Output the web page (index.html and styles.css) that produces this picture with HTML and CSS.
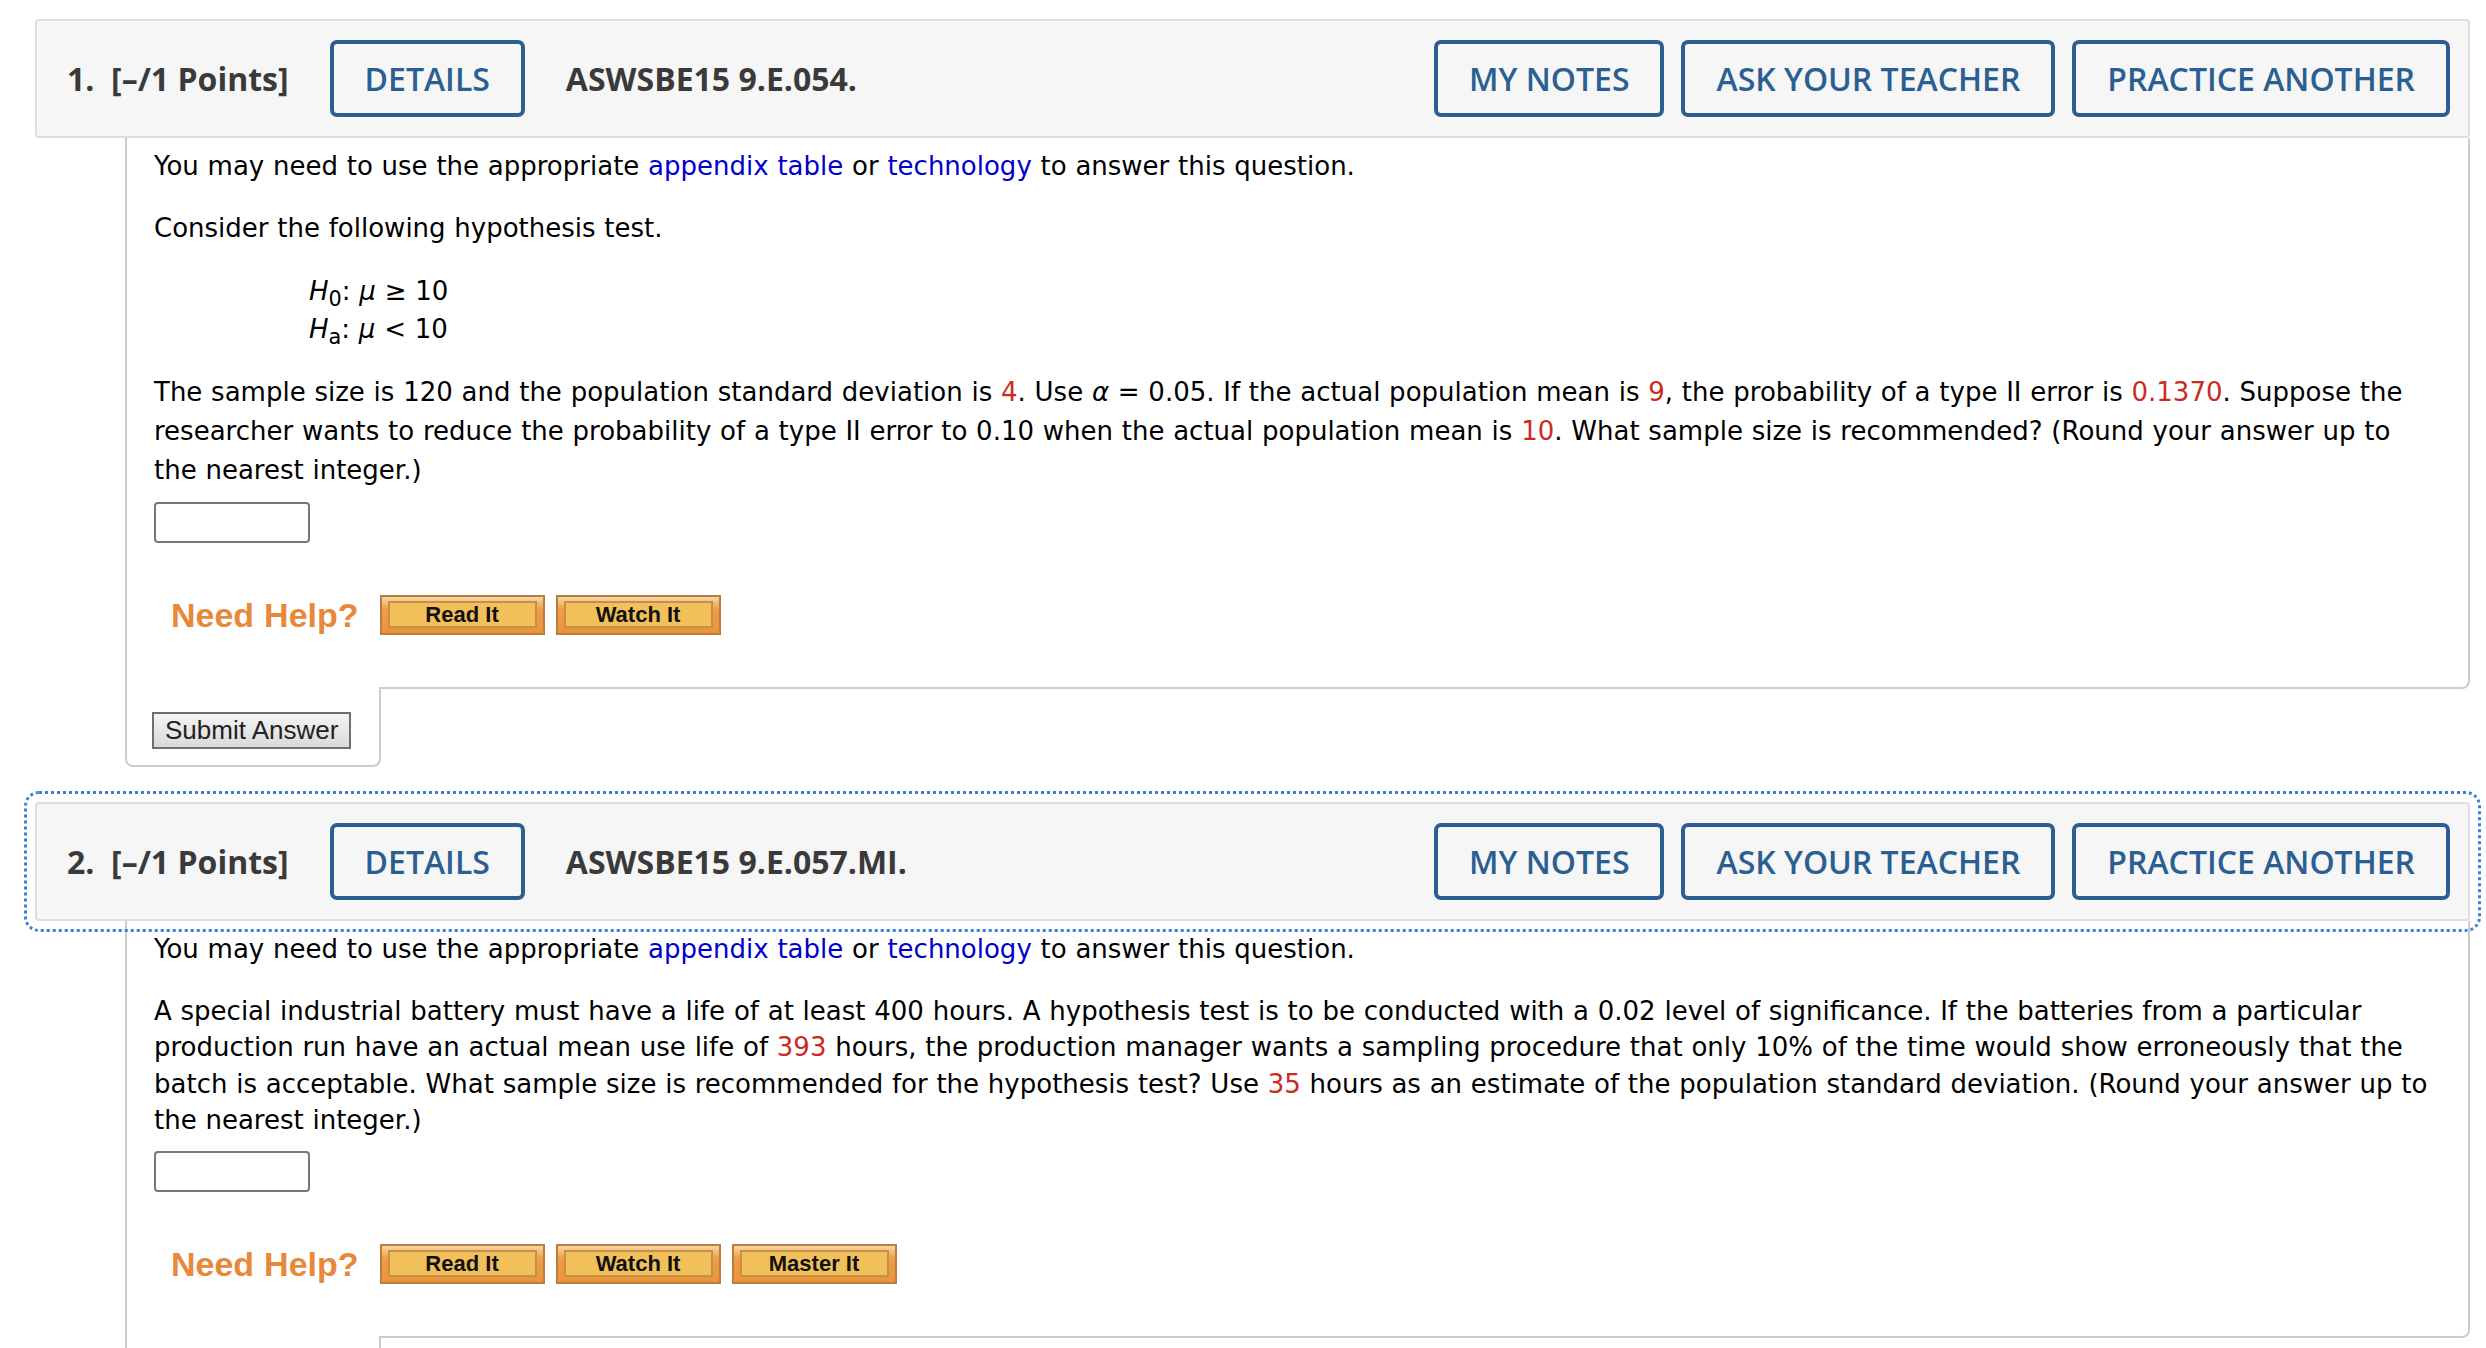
FILE: index.html
```html
<!DOCTYPE html>
<html lang="en">
<head>
  <meta charset="UTF-8" />
  <title>Assignment - Hypothesis Testing</title>
  <link rel="stylesheet" href="styles.css">
</head>
<body>

<div class="question">
  <div class="q-head">
    <span class="q-num">1.&nbsp; [–/1 Points]</span>
    <button class="head-btn">DETAILS</button>
    <span class="q-code">ASWSBE15 9.E.054.</span>
    <div class="head-tools">
      <button class="head-btn">MY NOTES</button>
      <button class="head-btn">ASK YOUR TEACHER</button>
      <button class="head-btn">PRACTICE ANOTHER</button>
    </div>
  </div>
  <div class="q-body">
    <p>You may need to use the appropriate <a href="#">appendix table</a> or <a href="#">technology</a> to answer this question.</p>
    <p>Consider the following hypothesis test.</p>
    <div class="hypo">
      <div><i>H</i><sub>0</sub>: <i>μ</i> ≥ 10</div>
      <div><i>H</i><sub>a</sub>: <i>μ</i> &lt; 10</div>
    </div>
    <p class="q-text math">The sample size is 120 and the population standard deviation is <span class="red">4</span>. Use <i>α</i> = 0.05. If the actual population mean is <span class="red">9</span>, the probability of a type II error is <span class="red">0.1370</span>. Suppose the researcher wants to reduce the probability of a type II error to 0.10 when the actual population mean is <span class="red">10</span>. What sample size is recommended? (Round your answer up to the nearest integer.)</p>
    <input class="answer" type="text" />
    <div class="help">
      <span class="help-label">Need Help?</span>
      <button class="help-btn"><span>Read It</span></button>
      <button class="help-btn"><span>Watch It</span></button>
    </div>
  </div>
  <div class="submit-tab">
    <button class="submit">Submit Answer</button>
  </div>
</div>

<div class="question">
  <div class="q-head focused">
    <span class="q-num">2.&nbsp; [–/1 Points]</span>
    <button class="head-btn">DETAILS</button>
    <span class="q-code">ASWSBE15 9.E.057.MI.</span>
    <div class="head-tools">
      <button class="head-btn">MY NOTES</button>
      <button class="head-btn">ASK YOUR TEACHER</button>
      <button class="head-btn">PRACTICE ANOTHER</button>
    </div>
  </div>
  <div class="q-body">
    <p>You may need to use the appropriate <a href="#">appendix table</a> or <a href="#">technology</a> to answer this question.</p>
    <p class="q-text">A special industrial battery must have a life of at least 400 hours. A hypothesis test is to be conducted with a 0.02 level of significance. If the batteries from a particular production run have an actual mean use life of <span class="red">393</span> hours, the production manager wants a sampling procedure that only 10% of the time would show erroneously that the batch is acceptable. What sample size is recommended for the hypothesis test? Use <span class="red">35</span> hours as an estimate of the population standard deviation. (Round your answer up to the nearest integer.)</p>
    <input class="answer" type="text" />
    <div class="help">
      <span class="help-label">Need Help?</span>
      <button class="help-btn"><span>Read It</span></button>
      <button class="help-btn"><span>Watch It</span></button>
      <button class="help-btn"><span>Master It</span></button>
    </div>
  </div>
  <div class="submit-tab">
    <button class="submit">Submit Answer</button>
  </div>
</div>

</body>
</html>
```

FILE: styles.css
```css
body {
  margin: 0;
  background-color: #fff;
  color: #000;
  font-family: Verdana, "DejaVu Sans", sans-serif;
  font-size: 26px;
  word-spacing: 0.5px;
  overflow: hidden;
}
.question {
  margin: 19px 16px 35px 35px;
}
.q-head {
  display: flex;
  align-items: center;
  gap: 41px;
  height: 115px;
  padding: 0 18px 0 30px;
  background-color: #f6f6f6;
  border: 2px solid #dedede;
  border-radius: 4px;
  font-family: "Open Sans", sans-serif;
  font-size: 32px;
  font-weight: 700;
  word-spacing: 0;
  color: #3a3a3a;
}
.q-head.focused {
  outline: 3px dotted #3c7fd8;
  outline-offset: 8px;
}
.head-tools {
  margin-left: auto;
  display: flex;
  gap: 17px;
}
.head-btn {
  height: 77px;
  padding: 0 31px;
  font-family: "Open Sans", sans-serif;
  font-size: 32px;
  font-weight: 600;
  color: #2b5f92;
  background-color: #f6f6f6;
  border: 4px solid #2c5e92;
  border-radius: 7px;
  cursor: pointer;
}
.q-body {
  margin-left: 90px;
  padding: 10px 36px 52px 27px;
  border: 2px solid #ccc;
  border-top: 0;
  border-bottom-right-radius: 8px;
  line-height: 36.5px;
}
p {
  margin: 0 0 25px;
}
a {
  color: #0000cc;
  text-decoration: none;
}
.red {
  color: #cc2a1e;
}
.hypo {
  padding-left: 155px;
  margin: 26px 0 25px;
  line-height: 38px;
}
sub {
  font-size: 0.8em;
  line-height: 0;
}
.q-text {
  margin-bottom: 12px;
}
.q-text.math {
  line-height: 39px;
}
.answer {
  display: block;
  box-sizing: border-box;
  width: 156px;
  height: 41px;
  border: 2px solid #777;
  border-radius: 4px;
}
.help {
  display: flex;
  align-items: center;
  gap: 11px;
  margin-top: 52px;
  padding-left: 17px;
}
.help-label {
  margin-right: 10px;
  font-family: "Liberation Sans", Arial, sans-serif;
  font-size: 34px;
  font-weight: 700;
  line-height: 40px;
  color: #e8893a;
}
.help-btn {
  box-sizing: border-box;
  width: 165px;
  height: 40px;
  padding: 4px 6px 5px;
  border: 2px solid #b87d40;
  background: linear-gradient(#f8d7a2, #ef9d42 35%, #ec9436);
  cursor: pointer;
}
.help-btn span {
  display: block;
  box-sizing: border-box;
  height: 27px;
  border: 2px solid #c4904f;
  background-color: #f2c05a;
  font-family: "Liberation Sans", Arial, sans-serif;
  font-size: 22px;
  font-weight: 700;
  line-height: 23px;
  word-spacing: 0;
  color: #111;
}
.submit-tab {
  box-sizing: border-box;
  width: 256px;
  margin: -2px 0 0 90px;
  padding: 25px 0 16px 25px;
  background-color: #fff;
  border: 2px solid #ccc;
  border-top: 0;
  border-radius: 0 0 8px 8px;
}
.submit {
  height: 37px;
  padding: 0 11px;
  font-family: "Liberation Sans", Arial, sans-serif;
  font-size: 26px;
  word-spacing: 0;
  color: #222;
  background: linear-gradient(#f4f4f4, #dadada);
  border: 2px solid #6f6f6f;
  cursor: pointer;
}
```
